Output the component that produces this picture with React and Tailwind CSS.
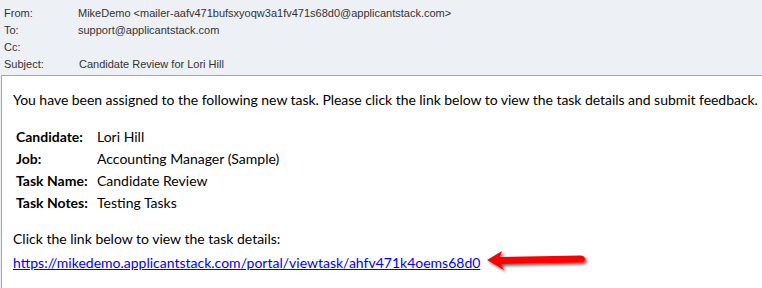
export default function App() {
  const header = [
    ["From:", "MikeDemo <mailer-aafv471bufsxyoqw3a1fv471s68d0@applicantstack.com>"],
    ["To:", "support@applicantstack.com"],
    ["Cc:", ""],
    ["Subject:", "Candidate Review for Lori Hill"],
  ];
  const rows = [
    ["Candidate:", "Lori Hill"],
    ["Job:", "Accounting Manager (Sample)"],
    ["Task Name:", "Candidate Review"],
    ["Task Notes:", "Testing Tasks"],
  ];

  return (
    <div className="w-[762px] h-[288px] overflow-hidden bg-[#edf0f5]">
      <div className="h-[75px] pt-[5px] pl-[4px] font-['Liberation_Sans',sans-serif] text-[11px] text-[#333]">
        {header.map(([label, value]) => (
          <div key={label} className="flex h-[17px] items-center">
            <span className="w-[74px]">{label}</span>
            <span className={label === "Subject:" ? "pl-[1px]" : ""}>{value}</span>
          </div>
        ))}
      </div>
      <div className="ml-[1px] h-[213px] border-l border-t border-[#a5a5a5] bg-white pl-[11px] pt-[14px] font-['Lato',sans-serif] text-[14px] text-black">
        <p className="whitespace-nowrap leading-[20px] tracking-[-0.04px]">
          You have been assigned to the following new task. Please click the link below to view the task details and submit feedback.
        </p>
        <div className="mt-[15px] pl-[3px]">
          {rows.map(([label, value]) => (
            <div key={label} className="flex h-[22px] items-center">
              <span className="w-[81px] font-bold">{label}</span>
              <span>{value}</span>
            </div>
          ))}
        </div>
        <p className="mt-[16px] leading-[19px]">Click the link below to view the task details:</p>
        <div className="flex items-center leading-[19px]">
          <a href="#" className="text-[#0000ff] underline">
            https://mikedemo.applicantstack.com/portal/viewtask/ahfv471k4oems68d0
          </a>
          <svg width="104" height="26" viewBox="0 0 104 26" className="ml-[5px] mt-[2px]">
            <defs>
              <filter id="sh" x="-20%" y="-40%" width="140%" height="180%">
                <feDropShadow dx="2" dy="2" stdDeviation="1.5" floodColor="#000" floodOpacity="0.6" />
              </filter>
            </defs>
            <path
              d="M2 10 L17 1 L15 7 L95 5.5 Q100 5.5 100 9 Q100 12.5 95 12.5 L16 14 L19 20 Z"
              fill="#ff0000"
              filter="url(#sh)"
            />
          </svg>
        </div>
      </div>
    </div>
  );
}
